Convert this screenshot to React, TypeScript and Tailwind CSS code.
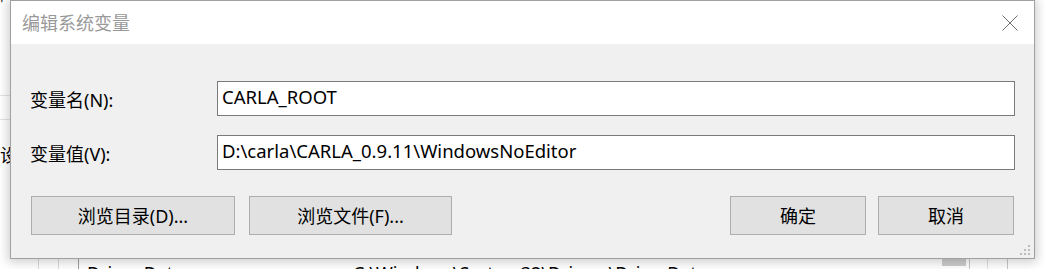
const FONT = '"Noto Sans", "Noto Sans CJK SC", sans-serif';

function DialogButton({ label, width }: { label: string; width: string }) {
  return (
    <button
      type="button"
      className={`${width} flex h-[39px] items-center justify-center border border-[#adadad] bg-[#e1e1e1] text-[18px] leading-[24px] text-black`}
    >
      {label}
    </button>
  );
}

function FieldRow({ label, value }: { label: string; value: string }) {
  return (
    <div className="flex h-[35px] items-center">
      <label className="w-[187px] pt-[3px] text-[18px] leading-[24px] text-black">{label}</label>
      <div className="flex h-[35px] flex-1 items-center border border-[#7a7a7a] bg-white pl-[4px]">
        <span className="pb-[3px] text-[18.5px] leading-[24px] text-black">{value}</span>
      </div>
    </div>
  );
}

function ResizeGrip() {
  const dots = [
    [8, 0],
    [4, 4],
    [8, 4],
    [0, 8],
    [4, 8],
    [8, 8],
  ];
  return (
    <svg width="10" height="10" viewBox="0 0 10 10" className="absolute bottom-[3px] right-[4px]">
      {dots.map(([x, y]) => (
        <rect key={`${x}-${y}`} x={x} y={y} width="2" height="2" fill="#bcbcbc" />
      ))}
    </svg>
  );
}

function EditVariableDialog() {
  return (
    <div className="absolute left-[10px] top-0 flex h-[259px] w-[1025px] flex-col border border-[#a0a0a0] bg-[#f0f0f0] shadow-[0_1px_10px_2px_rgba(0,0,0,0.2)]">
      <div className="flex h-[43px] shrink-0 items-center bg-white">
        <span className="flex-1 pl-[11px] text-[18px] leading-[24px] text-[#999999]">编辑系统变量</span>
        <div className="flex h-full w-[49px] items-center justify-center">
          <svg width="16" height="16" viewBox="0 0 16 16">
            <path d="M0.5 0.5L15.5 15.5M15.5 0.5L0.5 15.5" stroke="#6f6f6f" strokeWidth="1" fill="none" />
          </svg>
        </div>
      </div>

      <div className="relative flex flex-1 flex-col px-[19px] pt-[37px]">
        <div className="flex flex-col gap-[19px]">
          <FieldRow label="变量名(N):" value="CARLA_ROOT" />
          <FieldRow label="变量值(V):" value="D:\carla\CARLA_0.9.11\WindowsNoEditor" />
        </div>

        <div className="mx-[1px] mt-[26px] flex">
          <DialogButton label="浏览目录(D)..." width="w-[204px]" />
          <div className="w-[14px]" />
          <DialogButton label="浏览文件(F)..." width="w-[203px]" />
          <div className="flex-1" />
          <DialogButton label="确定" width="w-[136px]" />
          <div className="w-[12px]" />
          <DialogButton label="取消" width="w-[136px]" />
        </div>

        <ResizeGrip />
      </div>
    </div>
  );
}

export default function App() {
  return (
    <div
      className="relative h-[269px] w-[1045px] overflow-hidden bg-white"
      style={{ fontFamily: FONT }}
    >
      {/* window underneath the dialog */}
      <div className="flex h-full flex-col">
        <div className="flex h-[258px] flex-col">
          <span className="-mt-[6px] text-[16px] leading-[20px] text-[#222]">'</span>
          <div className="mt-[81px] h-px w-[30px] bg-[#e3e3e3]" />
          <div className="mt-[23px] h-px w-[30px] bg-[#e3e3e3]" />
          <span className="mt-[23px] text-[18px] leading-[24px] text-black">设</span>
        </div>
        <div className="flex h-[11px] items-start text-[18px] leading-[24px] text-black">
          <div className="h-full w-[38px]" />
          <div className="h-full w-[20px] border-l border-[#d9d9d9]" />
          <div className="h-full w-[20px] border-l border-[#d9d9d9]" />
          <div className="h-full w-[275px] border-l border-[#a0a0a0] pl-[8px] pt-[3px]">Driver Data</div>
          <div className="h-full w-[589px] pt-[3px]">C:\Windows\System32\Drivers\DriverData</div>
          <div className="h-[8px] w-[24px] bg-[#cdcdcd]" />
          <div className="h-full w-[3px]" />
          <div className="h-full w-[18px] border-l border-[#c8c8c8]" />
          <div className="h-full w-[20px] border-l border-[#e0e0e0]" />
          <div className="h-full w-[20px] border-l border-[#c8c8c8]" />
        </div>
      </div>

      <EditVariableDialog />
    </div>
  );
}
